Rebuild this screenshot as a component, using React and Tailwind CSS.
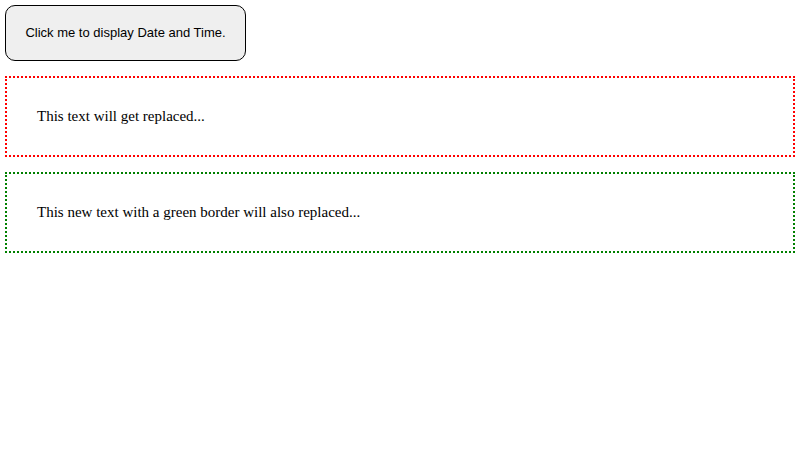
export default function App() {
  return (
    <div className="w-[800px] h-[450px] bg-white pt-[5px]" style={{ fontFamily: '"Liberation Serif", serif' }}>
      <button
        className="ml-[5px] w-[241px] h-[56px] rounded-[10px] border border-black bg-[#efefef] text-[13px] text-black block"
        style={{ fontFamily: '"Liberation Sans", Arial, sans-serif' }}
      >
        Click me to display Date and Time.
      </button>
      <div className="mx-[5px] mt-[15px] border-2 border-dotted border-[red] px-[30px] py-[30px] text-[15px] leading-[17px] text-black">
        This text will get replaced...
      </div>
      <div className="mx-[5px] mt-[15px] border-2 border-dotted border-[green] px-[30px] py-[30px] text-[15px] leading-[17px] text-black">
        This new text with a green border will also replaced...
      </div>
    </div>
  );
}
